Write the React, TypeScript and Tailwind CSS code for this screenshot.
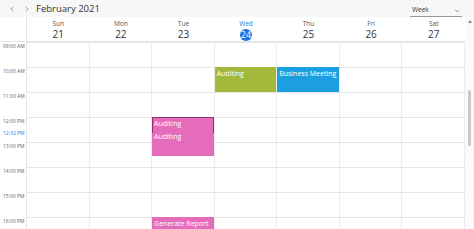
import { ChevronLeft, ChevronRight, ChevronDown } from "lucide-react";

type Day = { name: string; date: number; today?: boolean };

const DAYS: Day[] = [
  { name: "Sun", date: 21 },
  { name: "Mon", date: 22 },
  { name: "Tue", date: 23 },
  { name: "Wed", date: 24, today: true },
  { name: "Thu", date: 25 },
  { name: "Fri", date: 26 },
  { name: "Sat", date: 27 },
];

const HOURS = ["09:00 AM", "10:00 AM", "11:00 AM", "12:00 PM", "13:00 PM", "14:00 PM", "15:00 PM", "16:00 PM"];

// start/end in hours from 09:00, col = day index
type Appt = { title: string; col: number; start: number; end: number; color: string; outline?: boolean };

const APPTS: Appt[] = [
  { title: "Auditing", col: 3, start: 1, end: 2, color: "bg-[#a3b93b]" },
  { title: "Business Meeting", col: 4, start: 1, end: 2, color: "bg-[#1b9fe0]" },
  { title: "Auditing", col: 2, start: 3, end: 4.55, color: "bg-[#e56cba]", outline: true },
  { title: "Generate Report", col: 2, start: 7, end: 8, color: "bg-[#e56cba]" },
];

const ROW = 25;
const COL = 62.55;

export default function App() {
  return (
    <div className="h-[229px] w-[474px] overflow-hidden bg-white text-[#333]" style={{ fontFamily: '"Open Sans", "Noto Sans", sans-serif' }}>
      {/* toolbar */}
      <div className="flex h-[17px] items-center bg-[#f7f7f7] pl-[8px] pr-[12px]">
        <ChevronLeft size={8} strokeWidth={1.6} className="text-[#555]" />
        <ChevronRight size={8} strokeWidth={1.6} className="ml-[7px] text-[#555]" />
        <span className="ml-[5px] text-[9.5px] leading-none text-[#333]">February 2021</span>
        <div className="ml-auto mt-[5px] flex h-[12px] w-[52px] items-center justify-between border-b border-[#999] px-[2px]">
          <span className="text-[6.5px] leading-none text-[#333]">Week</span>
          <ChevronDown size={6} strokeWidth={2.5} className="text-[#555]" />
        </div>
      </div>

      <div className="flex">
        <div className="w-[465px]">
          {/* day header */}
          <div className="grid h-[25px] grid-cols-[27px_repeat(7,1fr)] border-b border-[#e4e4e4]">
            <div className="border-r border-[#e4e4e4]" />
            {DAYS.map((d) => (
              <div key={d.name} className="flex flex-col items-center pt-[2px]">
                <span className={`text-[6.5px] leading-[9px] ${d.today ? "text-[#1a7be6]" : "text-[#555]"}`}>{d.name}</span>
                {d.today ? (
                  <span className="mt-[0.5px] flex h-[12px] w-[12px] items-center justify-center rounded-full bg-[#1a73e8] text-[9px] leading-none text-white">
                    {d.date}
                  </span>
                ) : (
                  <span className="text-[10px] leading-[13px] text-[#333]">{d.date}</span>
                )}
              </div>
            ))}
          </div>

          {/* body */}
          <div className="relative grid grid-cols-[27px_1fr]">
            <div className="relative border-r border-[#e4e4e4]">
              {HOURS.map((h) => (
                <div key={h} className="h-[25px] whitespace-nowrap pl-[3px] pt-[2px] text-[5px] leading-none text-[#666]">
                  {h}
                </div>
              ))}
              <span className="absolute left-[3px] top-[89px] whitespace-nowrap text-[5px] leading-none text-[#1a7be6]">12:32 PM</span>
            </div>
            <div className="relative">
              {HOURS.map((h) => (
                <div key={h} className="grid h-[25px] grid-cols-7 border-t border-[#e6e6e6]">
                  {DAYS.map((d) => (
                    <div key={d.name} className="border-r border-[#ececec]" />
                  ))}
                </div>
              ))}
              {APPTS.map((a, i) => (
                <div
                  key={i}
                  className={`absolute px-[2px] pt-[2px] text-[7px] leading-[9px] text-white ${a.color}`}
                  style={{ left: a.col * COL, top: a.start * ROW, width: COL - 1, height: (a.end - a.start) * ROW }}
                >
                  {a.outline ? (
                    <>
                      <div className="absolute left-0 top-0 h-[16px] w-full border border-b-0 border-[#8c2f6e]" />
                      <div>{a.title}</div>
                      <div className="mt-[4px]">{a.title}</div>
                    </>
                  ) : (
                    a.title
                  )}
                </div>
              ))}
            </div>
          </div>
        </div>

        {/* scrollbar */}
        <div className="relative w-[9px] bg-[#fafafa]">
          <div className="absolute left-[3px] top-[3px] h-0 w-0 border-x-[2px] border-b-[3px] border-x-transparent border-b-[#888]" />
          <div className="absolute left-[3px] top-[73px] h-[56px] w-[3px] rounded-full bg-[#c8c8c8]" />
          <div className="absolute bottom-[3px] left-[3px] h-0 w-0 border-x-[2px] border-t-[3px] border-x-transparent border-t-[#888]" />
        </div>
      </div>
    </div>
  );
}
